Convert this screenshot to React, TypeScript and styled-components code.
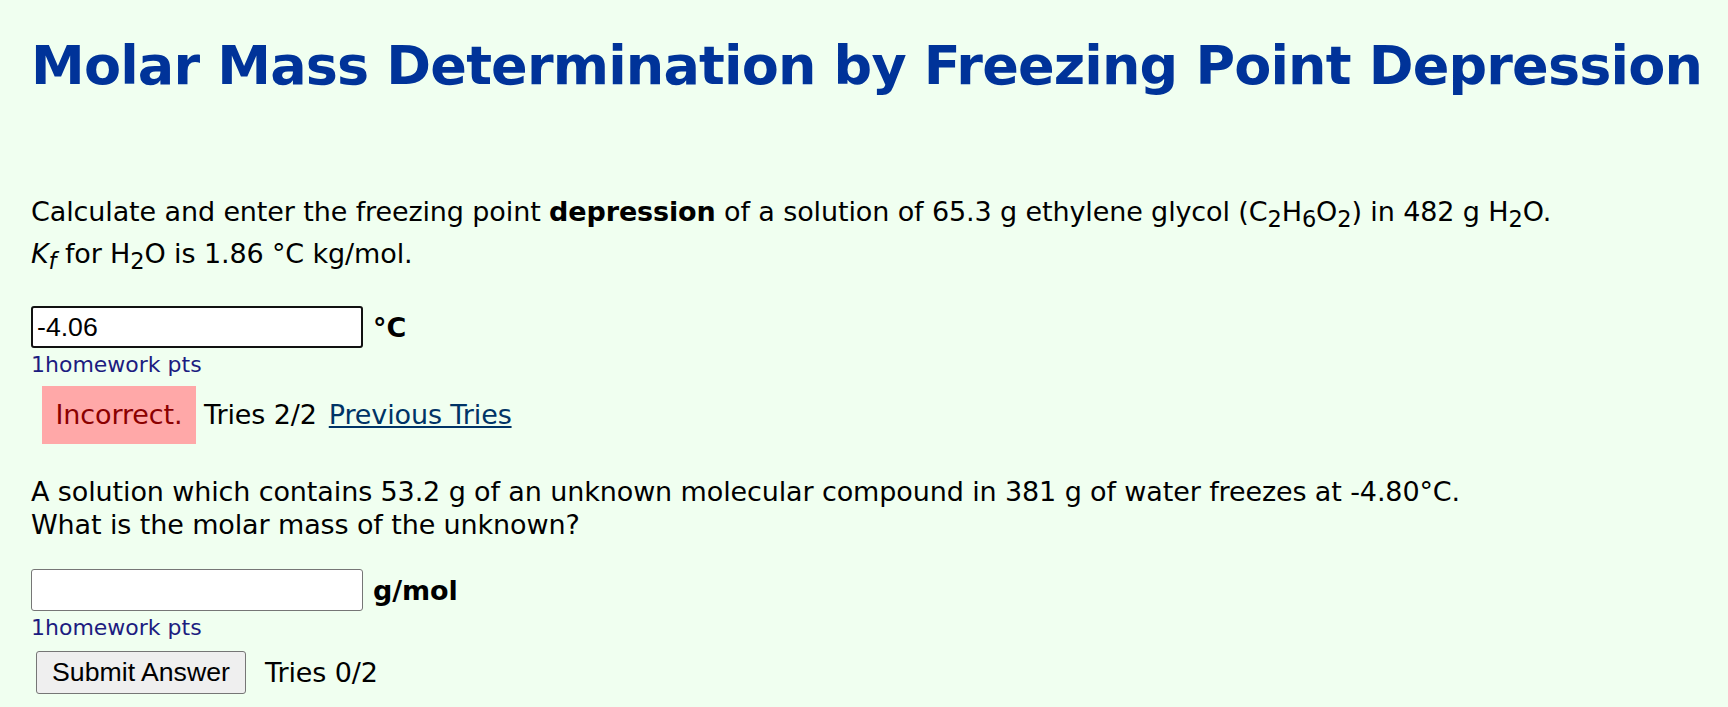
import React from "react";
import styled, { createGlobalStyle } from "styled-components";

const GlobalStyle = createGlobalStyle`
  body {
    margin: 0;
    background: #f0fff0;
    font-family: "DejaVu Sans", Verdana, sans-serif;
    color: #000;
  }
`;

const Page = styled.div`
  padding: 0 31px 20px;
  font-size: 27px;
  letter-spacing: -0.12px;
`;

const Title = styled.h1`
  margin: 34px 0 0;
  font-size: 54px;
  line-height: 63px;
  font-weight: bold;
  letter-spacing: -0.83px;
  color: #003399;
  white-space: nowrap;
`;

const Question = styled.p<{ $lh: number; $top: number }>`
  margin: ${(p) => p.$top}px 0 0;
  line-height: ${(p) => p.$lh}px;

  sub {
    line-height: 0;
  }
`;

const AnswerRow = styled.div<{ $top: number }>`
  display: flex;
  align-items: center;
  margin-top: ${(p) => p.$top}px;
`;

const AnswerInput = styled.input<{ $filled?: boolean }>`
  box-sizing: border-box;
  width: 332px;
  height: 42px;
  padding: 0 4px;
  font-family: "Liberation Sans", Arial, sans-serif;
  font-size: 26.67px;
  color: #000;
  background: #fff;
  border: ${(p) => (p.$filled ? "2px solid #111" : "1px solid #767676")};
  border-radius: 3px;
  outline: none;
`;

const Unit = styled.b`
  margin-left: 10px;
  line-height: normal;
`;

const Points = styled.div`
  margin-top: 4px;
  font-size: 22px;
  line-height: 26px;
  letter-spacing: 0;
  color: #1c1c80;
`;

const Feedback = styled.div`
  display: flex;
  align-items: baseline;
  margin: 8px 0 0 11px;
`;

const Verdict = styled.span`
  display: inline-block;
  padding: 12px 13.5px;
  line-height: 34px;
  background: #ffa8a8;
  color: #8b0000;
`;

const Tries = styled.span<{ $gap: number }>`
  margin-left: ${(p) => p.$gap}px;
`;

const TriesLink = styled.a`
  margin-left: 12px;
  color: #003366;
  text-decoration: underline;
`;

const SubmitButton = styled.button`
  box-sizing: border-box;
  width: 210px;
  height: 43px;
  margin-left: 5px;
  padding: 0;
  font-family: "Liberation Sans", Arial, sans-serif;
  font-size: 26.67px;
  color: #000;
  background: #efefef;
  border: 1px solid #767676;
  border-radius: 3px;
`;

export default function App() {
  return (
    <>
      <GlobalStyle />
      <Page>
        <Title>Molar Mass Determination by Freezing Point Depression</Title>

        <Question $top={94} $lh={42}>
          Calculate and enter the freezing point <b>depression</b> of a solution of 65.3 g
          ethylene glycol (C<sub>2</sub>H<sub>6</sub>O<sub>2</sub>) in 482 g H<sub>2</sub>O.
          <br />
          <i>K</i>
          <sub>
            <i>f</i>
          </sub>{" "}
          for H<sub>2</sub>O is 1.86 °C kg/mol.
        </Question>

        <AnswerRow $top={31}>
          <AnswerInput $filled defaultValue="-4.06" />
          <Unit>°C</Unit>
        </AnswerRow>
        <Points>1homework pts</Points>
        <Feedback>
          <Verdict>Incorrect.</Verdict>
          <Tries $gap={8}>Tries 2/2</Tries>
          <TriesLink href="#">Previous Tries</TriesLink>
        </Feedback>

        <Question $top={31} $lh={33}>
          A solution which contains 53.2 g of an unknown molecular compound in 381 g of water
          freezes at -4.80°C.
          <br />
          What is the molar mass of the unknown?
        </Question>

        <AnswerRow $top={28}>
          <AnswerInput />
          <Unit>g/mol</Unit>
        </AnswerRow>
        <Points>1homework pts</Points>
        <AnswerRow $top={10}>
          <SubmitButton>Submit Answer</SubmitButton>
          <Tries $gap={19}>Tries 0/2</Tries>
        </AnswerRow>
      </Page>
    </>
  );
}
